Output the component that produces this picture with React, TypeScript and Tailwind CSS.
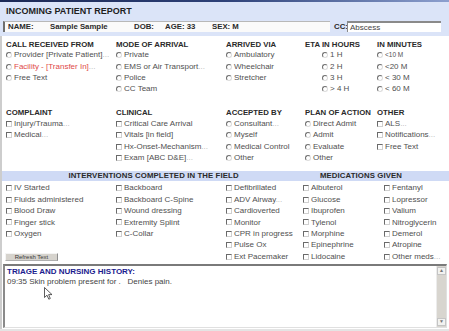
type Item = { label: string; more?: boolean; red?: boolean; small?: boolean };

const font = "font-['Liberation_Sans',Arial,sans-serif]";

function Radio() {
  return (
    <span className="inline-block w-[6px] h-[6px] shrink-0 rounded-full border border-t-[#6f6f6f] border-l-[#6f6f6f] border-r-[#dcdcdc] border-b-[#dcdcdc] bg-white" />
  );
}

function Check() {
  return (
    <span className="inline-block w-[6px] h-[6px] shrink-0 border border-t-[#6a6a6a] border-l-[#6a6a6a] border-r-[#d0d0d0] border-b-[#d0d0d0] bg-white" />
  );
}

function Row({ item, kind }: { item: Item; kind: 'radio' | 'check' }) {
  return (
    <div className="flex items-center gap-[2px] h-[11.4px] whitespace-nowrap">
      {kind === 'radio' ? <Radio /> : <Check />}
      <span
        className={`${item.small ? 'text-[6.5px]' : 'text-[8px]'} ${
          item.red ? 'text-[#e04a4a]' : 'text-[#505050]'
        }`}
      >
        {item.label}
        {item.more && <span className="text-[#b5b5b5]">...</span>}
      </span>
    </div>
  );
}

function Column({
  title,
  items,
  kind,
  indent = '',
}: {
  title?: string;
  items: Item[];
  kind: 'radio' | 'check';
  indent?: string;
}) {
  return (
    <div className="flex flex-col">
      {title && <div className="text-[7.8px] font-bold text-[#2a2a2a] leading-[11px] whitespace-nowrap">{title}</div>}
      <div className={indent}>
        {items.map((it) => (
          <Row key={it.label} item={it} kind={kind} />
        ))}
      </div>
    </div>
  );
}

const t = (label: string, more = false): Item => ({ label, more });

export default function App() {
  return (
    <div className={`w-[449px] h-[331px] overflow-hidden relative bg-[#e4e4e4] ${font}`}>
      <div className="h-[2px] bg-gradient-to-r from-[#1b2855] via-[#2e4178] to-[#8da0cf]" />

      {/* header */}
      <div className="h-[34px] bg-[#dbe4f8] pt-[2.5px]">
        <div className="pl-[6px] text-[9px] font-bold text-[#1e1e1e] leading-[12px]">INCOMING PATIENT REPORT</div>
        <div className="flex items-center mt-[4.5px] h-[11px]">
          <div className="ml-[3px] w-[327px] h-[11px] flex items-center bg-[#fafafa] border-l-2 border-l-[#6e6e6e] border-t border-t-[#b8b8b8] text-[7.8px] font-bold text-[#2a2a2a] whitespace-nowrap">
            <span className="ml-[3px] w-[42px]">NAME:</span>
            <span className="w-[84px]">Sample Sample</span>
            <span className="w-[31px]">DOB:</span>
            <span className="w-[47px]">AGE: 33</span>
            <span>SEX: M</span>
          </div>
          <span className="ml-[4px] w-[13px] text-[7.8px] font-bold text-[#2a2a2a]">CC:</span>
          <div className="w-[94px] h-[11px] flex items-center bg-white border-t-2 border-t-[#8a8a8a] border-l border-l-[#8a8a8a] pl-[2px] text-[8px] text-[#444]">
            Abscess
          </div>
        </div>
      </div>

      {/* body */}
      <div className="h-[293px] bg-white border-l-2 border-l-[#cdcdcd] relative">
        <div className="grid grid-cols-[110px_110px_79px_72px_1fr] pl-[4px] pt-[2.5px]">
          <Column
            title="CALL RECEIVED FROM"
            kind="radio"
            items={[
              t('Provider [Private Patient]', true),
              { label: 'Facility - [Transfer In]', more: true, red: true },
              t('Free Text'),
            ]}
          />
          <Column
            title="MODE OF ARRIVAL"
            kind="radio"
            items={[t('Private'), t('EMS or Air Transport', true), t('Police'), t('CC Team')]}
          />
          <Column title="ARRIVED VIA" kind="radio" items={[t('Ambulatory'), t('Wheelchair'), t('Stretcher')]} />
          <Column
            title="ETA IN HOURS"
            kind="radio"
            indent="pl-[17px]"
            items={[t('1 H'), t('2 H'), t('3 H'), t('> 4 H')]}
          />
          <Column
            title="IN MINUTES"
            kind="radio"
            items={[{ label: '<10 M', small: true }, t('<20 M'), t('< 30 M'), t('< 60 M')]}
          />
        </div>

        <div className="grid grid-cols-[110px_110px_79px_72px_1fr] pl-[4px] mt-[12px]">
          <Column title="COMPLAINT" kind="check" items={[t('Injury/Trauma', true), t('Medical', true)]} />
          <Column
            title="CLINICAL"
            kind="check"
            items={[
              t('Critical Care Arrival'),
              t('Vitals [in field]'),
              t('Hx-Onset-Mechanism', true),
              t('Exam [ABC D&E]', true),
            ]}
          />
          <Column
            title="ACCEPTED BY"
            kind="radio"
            items={[t('Consultant', true), t('Myself'), t('Medical Control'), t('Other')]}
          />
          <Column
            title="PLAN OF ACTION"
            kind="radio"
            items={[t('Direct Admit'), t('Admit'), t('Evaluate'), t('Other')]}
          />
          <Column title="OTHER" kind="check" items={[t('ALS', true), t('Notifications', true), t('Free Text')]} />
        </div>

        <div className="mt-[7px] h-[10px] bg-[#cfdaf5] flex items-center text-[7.8px] font-bold text-[#2a2a2a] whitespace-nowrap tracking-[0.1px]">
          <div className="w-[303px] text-center">INTERVENTIONS COMPLETED IN THE FIELD</div>
          <div className="w-[112px] text-center">MEDICATIONS GIVEN</div>
        </div>

        <div className="grid grid-cols-[110px_110px_77px_81px_1fr] pl-[4px] pt-[2px] h-[81.5px]">
          <div className="flex flex-col">
            <Column
              kind="check"
              items={[t('IV Started'), t('Fluids administered'), t('Blood Draw'), t('Finger stick'), t('Oxygen')]}
            />
            <button
              type="button"
              className="mt-auto mb-[1px] -ml-[1px] w-[53px] h-[8px] flex items-center justify-center bg-[#d6d3cd] border border-t-[#f4f4f4] border-l-[#f4f4f4] border-r-[#8e8e8e] border-b-[#b0b0b0] text-[6px] leading-none text-[#3a3a3a]"
            >
              Refresh Text
            </button>
          </div>
          <Column
            kind="check"
            items={[
              t('Backboard'),
              t('Backboard C-Spine'),
              t('Wound dressing'),
              t('Extremity Splint'),
              t('C-Collar'),
            ]}
          />
          <Column
            kind="check"
            items={[
              t('Defibrillated'),
              t('ADV Airway', true),
              t('Cardioverted'),
              t('Monitor'),
              t('CPR in progress'),
              t('Pulse Ox'),
              t('Ext Pacemaker'),
            ]}
          />
          <Column
            kind="check"
            items={[
              t('Albuterol'),
              t('Glucose'),
              t('Ibuprofen'),
              t('Tylenol'),
              t('Morphine'),
              t('Epinephrine'),
              t('Lidocaine'),
            ]}
          />
          <Column
            kind="check"
            items={[
              t('Fentanyl'),
              t('Lopressor'),
              t('Valium'),
              t('Nitroglycerin'),
              t('Demerol'),
              t('Atropine'),
              t('Other meds', true),
            ]}
          />
        </div>

        {/* history box */}
        <div className="ml-[1px] mt-[1.5px] w-[444px] h-[64px] bg-white border-t-2 border-l-2 border-t-[#7a7a7a] border-l-[#8a8a8a] border-r border-r-[#e0e0e0] border-b border-b-[#e0e0e0] flex">
          <div className="flex-1 pl-[2px] pt-[1px]">
            <div className="text-[8px] font-bold text-[#1b1b8e] leading-[10px]">TRIAGE AND NURSING HISTORY:</div>
            <div className="text-[8px] text-[#454545] leading-[10px] whitespace-pre">
              09:35 Skin problem present for .   Denies pain.
            </div>
          </div>
          <div className="w-[10px] flex flex-col bg-[#d8d5cf] border-l border-l-[#ececec]">
            <div className="h-[8px] mt-[1px] bg-[#f2f2f0] border border-[#c4c4c4] flex items-center justify-center text-[5px] text-[#777] leading-none">
              ▲
            </div>
            <div className="flex-1" />
            <div className="h-[8px] mb-[1px] bg-[#f2f2f0] border border-[#c4c4c4] flex items-center justify-center text-[5px] text-[#777] leading-none">
              ▼
            </div>
          </div>
        </div>

        {/* mouse pointer */}
        <svg className="absolute left-[42px] top-[251px]" width="9" height="13" viewBox="0 0 9 13">
          <path d="M0.5 0.5 L0.5 10.5 L3 8.2 L4.8 12.2 L6.3 11.5 L4.6 7.6 L8 7.6 Z" fill="white" stroke="#333" strokeWidth="0.8" />
        </svg>
      </div>
    </div>
  );
}
